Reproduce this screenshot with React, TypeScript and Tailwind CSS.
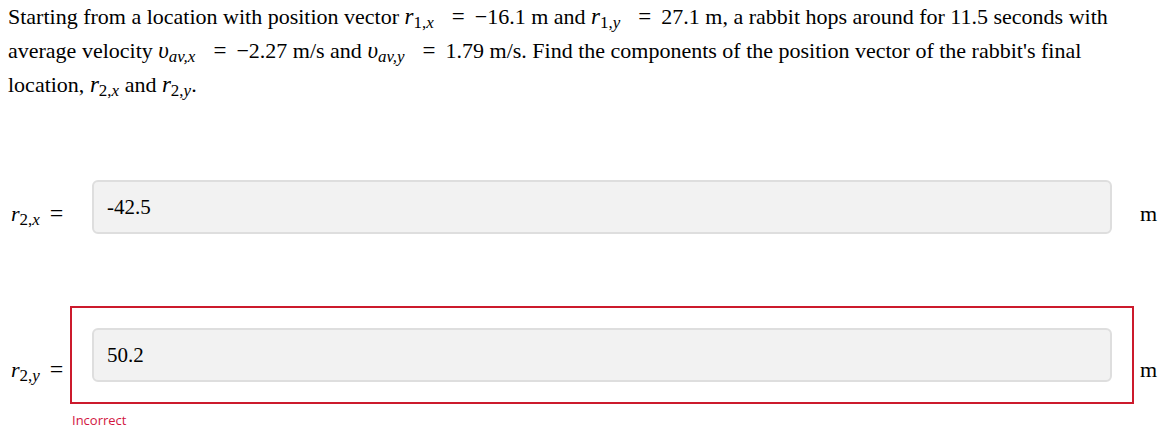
import React from "react";

const Sub = ({ children }: { children: React.ReactNode }) => (
  <sub className="text-[17px] italic">{children}</sub>
);

const M = ({ children }: { children: React.ReactNode }) => (
  <i className="text-[23px]">{children}</i>
);

const Eq = () => <span className="ml-[18px] mr-[10px] text-[23px]">=</span>;

const Row = ({
  sub,
  value,
  wrong,
}: {
  sub: React.ReactNode;
  value: string;
  wrong?: boolean;
}) => (
  <div className="flex items-center">
    <div className="w-[62px] shrink-0 pl-[3px] text-[22px] whitespace-nowrap">
      <i>r</i>
      <Sub>{sub}</Sub>
      <span className="ml-[10px] text-[24px]">=</span>
    </div>
    <div className="flex-1">
      <div
        className={
          wrong
            ? "border-2 border-[#cc1a2c] p-[20px]"
            : "border-2 border-transparent p-[20px]"
        }
      >
        <input
          readOnly
          defaultValue={value}
          className="block h-[54px] w-full rounded-[6px] border-2 border-[#dedede] bg-[#f2f2f2] pl-[13px] font-[Liberation_Serif,serif] text-[21px] text-black outline-none"
        />
      </div>
      {wrong ? (
        <div className="mt-[6px] h-[22px] pl-[2px] font-[Open_Sans,sans-serif] text-[13px] leading-[20px] text-[#d2163f]">
          Incorrect
        </div>
      ) : (
        <div className="h-[12px]" />
      )}
    </div>
    <div className="w-[29px] shrink-0 pl-[6px] text-[22px]">m</div>
  </div>
);

export default function App() {
  return (
    <div className="min-h-[448px] bg-white px-2 font-[Liberation_Serif,serif] text-black">
      <p className="text-[22px] leading-[34px]">
        Starting from a location with position vector <M>r</M>
        <Sub>
          <span className="not-italic">1,</span>x
        </Sub>
        <Eq />
        −16.1 m and <M>r</M>
        <Sub>
          <span className="not-italic">1,</span>y
        </Sub>
        <Eq />
        27.1 m, a rabbit hops around for 11.5 seconds with average velocity{" "}
        <M>υ</M>
        <Sub>av,x</Sub>
        <Eq />
        −2.27 m/s and <M>υ</M>
        <Sub>av,y</Sub>
        <Eq />
        1.79 m/s. Find the components of the position vector of the rabbit's
        final location, <M>r</M>
        <Sub>
          <span className="not-italic">2,</span>x
        </Sub>{" "}
        and <M>r</M>
        <Sub>
          <span className="not-italic">2,</span>y
        </Sub>
        .
      </p>
      <div className="mt-[56px]">
        <Row sub={<><span className="not-italic">2,</span>x</>} value="-42.5" />
      </div>
      <div className="mt-[38px]">
        <Row sub={<><span className="not-italic">2,</span>y</>} value="50.2" wrong />
      </div>
    </div>
  );
}
